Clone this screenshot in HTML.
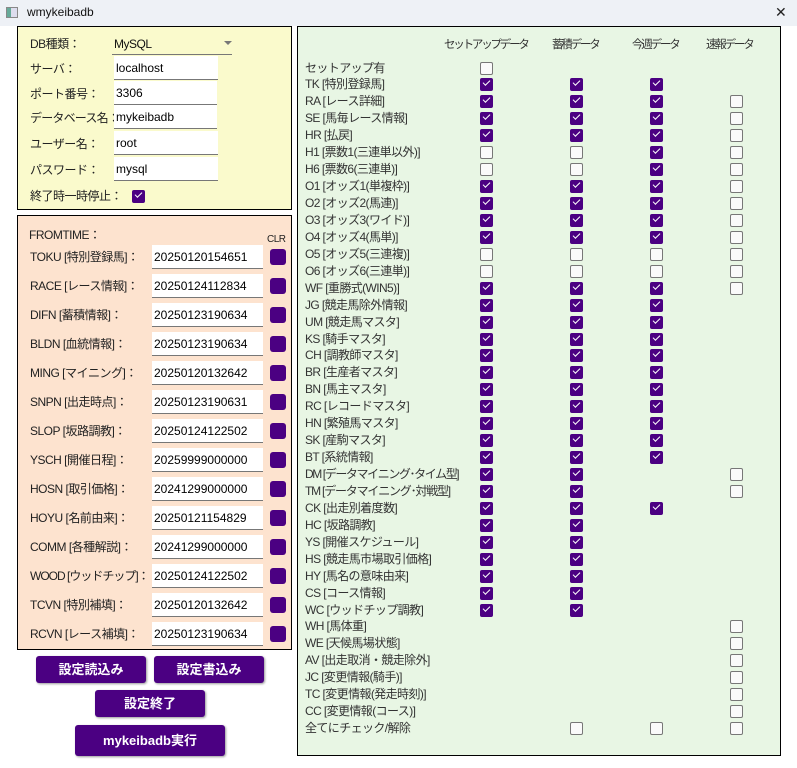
<!DOCTYPE html>
<html><head><meta charset="utf-8"><style>
*{box-sizing:border-box;margin:0;padding:0}
body{width:797px;height:768px;overflow:hidden;background:#fff;font-family:"Segoe UI","Liberation Sans","Noto Sans CJK JP",sans-serif;font-size:12px;color:#222;position:relative;letter-spacing:-0.5px}
.tb{position:absolute;left:0;top:0;width:797px;height:26px;background:#eef1f6;letter-spacing:0}
.tb .t{position:absolute;left:27px;top:5px;font-size:12px;color:#111}
.tb .ic{position:absolute;left:6px;top:7px;width:12px;height:11px;border:1px solid #888;background:linear-gradient(90deg,#6a9 0 40%,#dde 40%)}
.tb .x{position:absolute;left:775px;top:4px;font-size:14px;color:#222}
.p{position:absolute;border:1px solid #000}
.a{position:absolute;white-space:nowrap;line-height:16px}
.in{position:absolute;background:#fff;border-bottom:1px solid #777;height:24px;padding-left:2px;line-height:24px;font-size:12px;color:#000;letter-spacing:0}
.clr{position:absolute;width:16px;height:16px;background:#4b0082;border-radius:3px}
.btn{position:absolute;background:#4b0082;color:#fff;font-weight:bold;font-size:13px;text-align:center;border-radius:3px;box-shadow:1px 1px 2px #999;letter-spacing:0}
.h{position:absolute;white-space:nowrap;font-size:11.5px;letter-spacing:-2.2px;line-height:16px;color:#333}
.rows{position:absolute;left:305px;top:59.5px}
.r{height:16.94px;position:relative;width:470px}
.r .l{position:absolute;left:0;top:0;line-height:17px;white-space:nowrap;color:#333;letter-spacing:-0.6px}
.cb{position:absolute;top:2px;width:13px;height:13px;border-radius:2px}
.c{background:#4b0082}
.c::after{content:"";position:absolute;left:3px;top:2px;width:6px;height:3px;border-left:1.5px solid #fff;border-bottom:1.5px solid #fff;transform:rotate(-45deg)}
.u{border:1.5px solid #777;background:#fafafa}
.c1{left:175px}.c2{left:265px}.c3{left:345px}.c4{left:425px}
</style></head><body>
<div class="tb"><div class="ic"></div><div class="t">wmykeibadb</div><div class="x">✕</div></div>

<div class="p" style="left:17px;top:26px;width:275px;height:184px;background:#fafacc"></div>
<div class="a" style="left:30px;top:36px">DB種類：</div>
<div class="a" style="left:114px;top:36px;color:#111">MySQL</div>
<div style="position:absolute;left:112px;top:54px;width:120px;border-bottom:1px solid #777"></div>
<div style="position:absolute;left:224px;top:41px;width:0;height:0;border-left:4px solid transparent;border-right:4px solid transparent;border-top:4px solid #777"></div>
<div class="a" style="left:30px;top:61px">サーバ：</div><div class="in" style="left:114px;top:56px;width:104px">localhost</div>
<div class="a" style="left:30px;top:86px">ポート番号：</div><div class="in" style="left:114px;top:81px;width:103px">3306</div>
<div class="a" style="left:30px;top:110px;letter-spacing:-0.8px">データベース名：</div><div class="in" style="left:114px;top:105px;width:103px">mykeibadb</div>
<div class="a" style="left:30px;top:136px">ユーザー名：</div><div class="in" style="left:114px;top:131px;width:104px">root</div>
<div class="a" style="left:30px;top:162px">パスワード：</div><div class="in" style="left:114px;top:157px;width:104px">mysql</div>
<div class="a" style="left:30px;top:188px">終了時一時停止：</div><div class="cb c" style="left:132px;top:190px"></div>

<div class="p" style="left:17px;top:215px;width:275px;height:435px;background:#fde3cf"></div>
<div class="a" style="left:29px;top:227px">FROMTIME：</div>
<div class="a" style="left:267px;top:232px;font-size:10px">CLR</div>
<div class="a" style="left:30px;top:249px">TOKU [特別登録馬]：</div><div class="in" style="left:152px;top:245px;width:111px">20250120154651</div><div class="clr" style="left:270px;top:249px"></div>
<div class="a" style="left:30px;top:278px">RACE [レース情報]：</div><div class="in" style="left:152px;top:274px;width:111px">20250124112834</div><div class="clr" style="left:270px;top:278px"></div>
<div class="a" style="left:30px;top:307px">DIFN [蓄積情報]：</div><div class="in" style="left:152px;top:303px;width:111px">20250123190634</div><div class="clr" style="left:270px;top:307px"></div>
<div class="a" style="left:30px;top:336px">BLDN [血統情報]：</div><div class="in" style="left:152px;top:332px;width:111px">20250123190634</div><div class="clr" style="left:270px;top:336px"></div>
<div class="a" style="left:30px;top:365px">MING [マイニング]：</div><div class="in" style="left:152px;top:361px;width:111px">20250120132642</div><div class="clr" style="left:270px;top:365px"></div>
<div class="a" style="left:30px;top:394px">SNPN [出走時点]：</div><div class="in" style="left:152px;top:390px;width:111px">20250123190631</div><div class="clr" style="left:270px;top:394px"></div>
<div class="a" style="left:30px;top:423px">SLOP [坂路調教]：</div><div class="in" style="left:152px;top:419px;width:111px">20250124122502</div><div class="clr" style="left:270px;top:423px"></div>
<div class="a" style="left:30px;top:452px">YSCH [開催日程]：</div><div class="in" style="left:152px;top:448px;width:111px">20259999000000</div><div class="clr" style="left:270px;top:452px"></div>
<div class="a" style="left:30px;top:481px">HOSN [取引価格]：</div><div class="in" style="left:152px;top:477px;width:111px">20241299000000</div><div class="clr" style="left:270px;top:481px"></div>
<div class="a" style="left:30px;top:510px">HOYU [名前由来]：</div><div class="in" style="left:152px;top:506px;width:111px">20250121154829</div><div class="clr" style="left:270px;top:510px"></div>
<div class="a" style="left:30px;top:539px">COMM [各種解説]：</div><div class="in" style="left:152px;top:535px;width:111px">20241299000000</div><div class="clr" style="left:270px;top:539px"></div>
<div class="a" style="left:30px;top:568px;letter-spacing:-1px">WOOD [ウッドチップ]：</div><div class="in" style="left:152px;top:564px;width:111px">20250124122502</div><div class="clr" style="left:270px;top:568px"></div>
<div class="a" style="left:30px;top:597px">TCVN [特別補填]：</div><div class="in" style="left:152px;top:593px;width:111px">20250120132642</div><div class="clr" style="left:270px;top:597px"></div>
<div class="a" style="left:30px;top:626px">RCVN [レース補填]：</div><div class="in" style="left:152px;top:622px;width:111px">20250123190634</div><div class="clr" style="left:270px;top:626px"></div>

<div class="btn" style="left:36px;top:656px;width:110px;height:27px;line-height:27px">設定読込み</div>
<div class="btn" style="left:154px;top:656px;width:110px;height:27px;line-height:27px">設定書込み</div>
<div class="btn" style="left:95px;top:690px;width:110px;height:27px;line-height:27px">設定終了</div>
<div class="btn" style="left:75px;top:725px;width:150px;height:31px;line-height:31px">mykeibadb実行</div>

<div class="p" style="left:297px;top:26px;width:484px;height:730px;background:#e8f6e4"></div>
<div class="h" style="left:444px;top:37px">セットアップデータ</div>
<div class="h" style="left:552px;top:37px">蓄積データ</div>
<div class="h" style="left:632px;top:37px">今週データ</div>
<div class="h" style="left:706px;top:37px">速報データ</div>

<div class="rows">
<div class="r"><span class="l">セットアップ有</span><i class="cb u c1"></i></div>
<div class="r"><span class="l">TK [特別登録馬]</span><i class="cb c c1"></i><i class="cb c c2"></i><i class="cb c c3"></i></div>
<div class="r"><span class="l">RA [レース詳細]</span><i class="cb c c1"></i><i class="cb c c2"></i><i class="cb c c3"></i><i class="cb u c4"></i></div>
<div class="r"><span class="l">SE [馬毎レース情報]</span><i class="cb c c1"></i><i class="cb c c2"></i><i class="cb c c3"></i><i class="cb u c4"></i></div>
<div class="r"><span class="l">HR [払戻]</span><i class="cb c c1"></i><i class="cb c c2"></i><i class="cb c c3"></i><i class="cb u c4"></i></div>
<div class="r"><span class="l">H1 [票数1(三連単以外)]</span><i class="cb u c1"></i><i class="cb u c2"></i><i class="cb c c3"></i><i class="cb u c4"></i></div>
<div class="r"><span class="l">H6 [票数6(三連単)]</span><i class="cb u c1"></i><i class="cb u c2"></i><i class="cb c c3"></i><i class="cb u c4"></i></div>
<div class="r"><span class="l">O1 [オッズ1(単複枠)]</span><i class="cb c c1"></i><i class="cb c c2"></i><i class="cb c c3"></i><i class="cb u c4"></i></div>
<div class="r"><span class="l">O2 [オッズ2(馬連)]</span><i class="cb c c1"></i><i class="cb c c2"></i><i class="cb c c3"></i><i class="cb u c4"></i></div>
<div class="r"><span class="l">O3 [オッズ3(ワイド)]</span><i class="cb c c1"></i><i class="cb c c2"></i><i class="cb c c3"></i><i class="cb u c4"></i></div>
<div class="r"><span class="l">O4 [オッズ4(馬単)]</span><i class="cb c c1"></i><i class="cb c c2"></i><i class="cb c c3"></i><i class="cb u c4"></i></div>
<div class="r"><span class="l">O5 [オッズ5(三連複)]</span><i class="cb u c1"></i><i class="cb u c2"></i><i class="cb u c3"></i><i class="cb u c4"></i></div>
<div class="r"><span class="l">O6 [オッズ6(三連単)]</span><i class="cb u c1"></i><i class="cb u c2"></i><i class="cb u c3"></i><i class="cb u c4"></i></div>
<div class="r"><span class="l">WF [重勝式(WIN5)]</span><i class="cb c c1"></i><i class="cb c c2"></i><i class="cb c c3"></i><i class="cb u c4"></i></div>
<div class="r"><span class="l">JG [競走馬除外情報]</span><i class="cb c c1"></i><i class="cb c c2"></i><i class="cb c c3"></i></div>
<div class="r"><span class="l">UM [競走馬マスタ]</span><i class="cb c c1"></i><i class="cb c c2"></i><i class="cb c c3"></i></div>
<div class="r"><span class="l">KS [騎手マスタ]</span><i class="cb c c1"></i><i class="cb c c2"></i><i class="cb c c3"></i></div>
<div class="r"><span class="l">CH [調教師マスタ]</span><i class="cb c c1"></i><i class="cb c c2"></i><i class="cb c c3"></i></div>
<div class="r"><span class="l">BR [生産者マスタ]</span><i class="cb c c1"></i><i class="cb c c2"></i><i class="cb c c3"></i></div>
<div class="r"><span class="l">BN [馬主マスタ]</span><i class="cb c c1"></i><i class="cb c c2"></i><i class="cb c c3"></i></div>
<div class="r"><span class="l">RC [レコードマスタ]</span><i class="cb c c1"></i><i class="cb c c2"></i><i class="cb c c3"></i></div>
<div class="r"><span class="l">HN [繁殖馬マスタ]</span><i class="cb c c1"></i><i class="cb c c2"></i><i class="cb c c3"></i></div>
<div class="r"><span class="l">SK [産駒マスタ]</span><i class="cb c c1"></i><i class="cb c c2"></i><i class="cb c c3"></i></div>
<div class="r"><span class="l">BT [系統情報]</span><i class="cb c c1"></i><i class="cb c c2"></i><i class="cb c c3"></i></div>
<div class="r"><span class="l" style="letter-spacing:-1.4px">DM [データマイニング･タイム型]</span><i class="cb c c1"></i><i class="cb c c2"></i><i class="cb u c4"></i></div>
<div class="r"><span class="l" style="letter-spacing:-1.2px">TM [データマイニング･対戦型]</span><i class="cb c c1"></i><i class="cb c c2"></i><i class="cb u c4"></i></div>
<div class="r"><span class="l">CK [出走別着度数]</span><i class="cb c c1"></i><i class="cb c c2"></i><i class="cb c c3"></i></div>
<div class="r"><span class="l">HC [坂路調教]</span><i class="cb c c1"></i><i class="cb c c2"></i></div>
<div class="r"><span class="l">YS [開催スケジュール]</span><i class="cb c c1"></i><i class="cb c c2"></i></div>
<div class="r"><span class="l">HS [競走馬市場取引価格]</span><i class="cb c c1"></i><i class="cb c c2"></i></div>
<div class="r"><span class="l">HY [馬名の意味由来]</span><i class="cb c c1"></i><i class="cb c c2"></i></div>
<div class="r"><span class="l">CS [コース情報]</span><i class="cb c c1"></i><i class="cb c c2"></i></div>
<div class="r"><span class="l">WC [ウッドチップ調教]</span><i class="cb c c1"></i><i class="cb c c2"></i></div>
<div class="r"><span class="l">WH [馬体重]</span><i class="cb u c4"></i></div>
<div class="r"><span class="l">WE [天候馬場状態]</span><i class="cb u c4"></i></div>
<div class="r"><span class="l">AV [出走取消・競走除外]</span><i class="cb u c4"></i></div>
<div class="r"><span class="l">JC [変更情報(騎手)]</span><i class="cb u c4"></i></div>
<div class="r"><span class="l">TC [変更情報(発走時刻)]</span><i class="cb u c4"></i></div>
<div class="r"><span class="l">CC [変更情報(コース)]</span><i class="cb u c4"></i></div>
<div class="r"><span class="l">全てにチェック/解除</span><i class="cb u c2"></i><i class="cb u c3"></i><i class="cb u c4"></i></div>
</div>
</body></html>
